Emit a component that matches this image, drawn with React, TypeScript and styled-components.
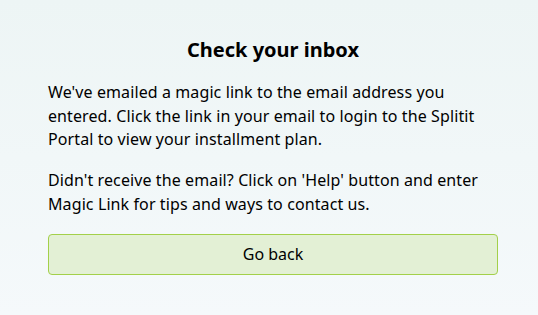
import { createGlobalStyle } from "styled-components";
import styled from "styled-components";

const GlobalStyle = createGlobalStyle`
  html, body {
    margin: 0;
    padding: 0;
  }
  body {
    min-height: 315px;
    background: linear-gradient(180deg, #edf5f5 0%, #f5f9fb 100%);
    font-family: "Noto Sans", "Open Sans", sans-serif;
    color: #000;
  }
`;

const Page = styled.div`
  height: 315px;
  padding: 38px 40px 0 48px;
  box-sizing: border-box;
`;

const Title = styled.h1`
  margin: 0 0 19px;
  font-size: 20px;
  line-height: 24px;
  font-weight: 700;
  text-align: center;
  color: #000;
`;

const Text = styled.p`
  margin: 0 0 17.5px;
  max-width: 433px;
  font-size: 16px;
  line-height: 23.5px;
  letter-spacing: 0.1px;
  color: #000;
`;

const Button = styled.button`
  display: block;
  width: 100%;
  height: 41px;
  margin-top: 17px;
  background: #e3f0d5;
  border: 1px solid #a3d04a;
  border-radius: 4px;
  font-family: inherit;
  font-size: 16px;
  color: #000;
  cursor: pointer;
`;

export default function App() {
  return (
    <>
      <GlobalStyle />
      <Page>
        <Title>Check your inbox</Title>
        <Text>
          We've emailed a magic link to the email address you entered. Click the link in your email to login to the Splitit Portal to view your installment plan.
        </Text>
        <Text>
          Didn't receive the email? Click on 'Help' button and enter Magic Link for tips and ways to contact us.
        </Text>
        <Button>Go back</Button>
      </Page>
    </>
  );
}
